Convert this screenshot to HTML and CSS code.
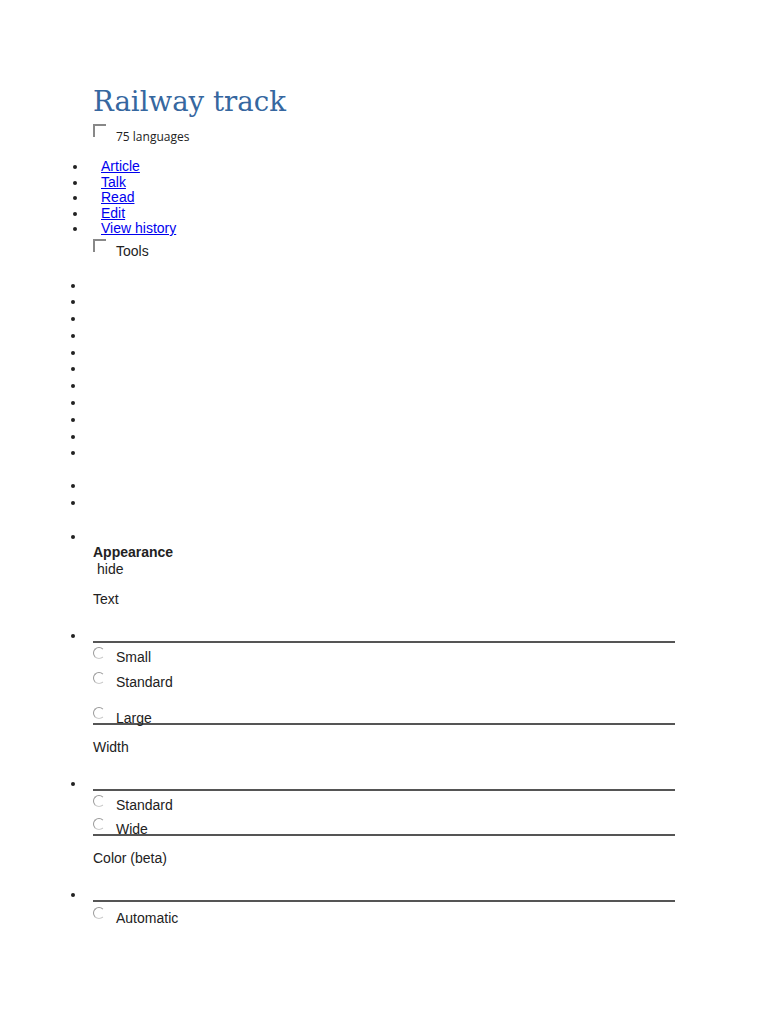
FILE: index.html
```html
<!DOCTYPE html>
<html lang="en">
<head>
    <meta charset="UTF-8">
    <title>Railway track</title>
    <link rel="stylesheet" href="styles.css">
</head>
<body>
<div class="page">
    <h1 class="title">Railway track</h1>

    <!-- Idiomas -->
    <div class="toggle lang">
        <span class="check"></span>
        <span>75 languages</span>
    </div>

    <!-- Pestañas -->
    <ul class="tabs">
        <li><a href="#">Article</a></li>
        <li><a href="#">Talk</a></li>
        <li><a href="#">Read</a></li>
        <li><a href="#">Edit</a></li>
        <li><a href="#">View history</a></li>
    </ul>

    <div class="toggle tools">
        <span class="check"></span>
        <span>Tools</span>
    </div>

    <!-- Menú de herramientas (vacío) -->
    <ul class="dots">
        <li></li><li></li><li></li><li></li><li></li><li></li>
        <li></li><li></li><li></li><li></li><li></li>
    </ul>

    <ul class="dots second">
        <li></li><li></li>
    </ul>

    <!-- Apariencia -->
    <ul class="appearance">
        <li class="group first">
            <div class="app-title">Appearance</div>
            <div class="hide">hide</div>
            <div class="label">Text</div>
        </li>
        <li class="group">
            <div class="options">
                <div class="option"><span class="radio"></span>Small</div>
                <div class="option"><span class="radio"></span>Standard</div>
                <div class="option far"><span class="radio"></span>Large</div>
            </div>
            <div class="label">Width</div>
        </li>
        <li class="group">
            <div class="options">
                <div class="option"><span class="radio"></span>Standard</div>
                <div class="option near"><span class="radio"></span>Wide</div>
            </div>
            <div class="label">Color (beta)</div>
        </li>
        <li class="group last">
            <div class="options open">
                <div class="option"><span class="radio"></span>Automatic</div>
            </div>
        </li>
    </ul>
</div>
</body>
</html>
```

FILE: styles.css
```css
/* General */
body {
    margin: 0;
    font-family: "Liberation Sans", Arial, sans-serif;
    font-size: 14px;
    color: #222;
    background: #fff;
}

.page {
    padding: 87px 0 0 93px;
}

.title {
    margin: 0;
    font-family: "DejaVu Serif", serif;
    font-size: 27.6px;
    font-weight: normal;
    color: #36679f;
    line-height: 30px;
}

/* Casillas */
.toggle {
    display: flex;
    align-items: flex-start;
}

.check {
    width: 11px;
    height: 11px;
    border-top: 2px solid #888;
    border-left: 2px solid #888;
    margin-right: 10px;
}

.toggle span:last-child {
    padding-top: 4px;
    line-height: 17px;
}

.lang {
    margin-top: 7px;
    font-family: "Open Sans", sans-serif;
    font-size: 12px;
}

.tools {
    margin-top: 2px;
}

/* Pestañas */
.tabs {
    margin: 14px 0 0 -5px;
    padding-left: 0;
    line-height: 15.5px;
}

.tabs li {
    padding-left: 13px;
}

.tabs a {
    color: #0000ee;
}

/* Listas vacías */
.dots,
.appearance {
    margin: 0 0 0 -7px;
    padding-left: 0;
}

.dots li,
.appearance > li {
    padding-left: 7px;
}

.dots li {
    height: 16.8px;
}

.dots {
    margin-top: 17px;
}

.dots.second {
    margin-top: 16px;
}

/* Apariencia */
.appearance {
    margin-top: 17px;
}

.group::before {
    content: "\a0";
    display: block;
    line-height: 12px;
}

.group.first::before {
    line-height: 16px;
}

.group.last::before {
    line-height: 11px;
}

.app-title {
    font-weight: bold;
    line-height: 16px;
}

.hide {
    padding-left: 4px;
    line-height: 16px;
    margin-top: 1px;
}

.label {
    line-height: 16px;
    margin-top: 14px;
    margin-bottom: 20px;
}

.options {
    width: 582px;
    border-top: 2px solid #555;
    border-bottom: 2px solid #555;
    padding-top: 7px;
}

.options.open {
    border-bottom: none;
    padding-top: 9px;
}

.option {
    display: flex;
    align-items: center;
    line-height: 14px;
    height: 14px;
    margin-bottom: 11px;
}

.option:last-child {
    margin-bottom: 0;
    height: 12px;
    align-items: flex-start;
}

.option.far {
    margin-top: 22px;
}

.option.near {
    margin-top: -1px;
}

.radio {
    width: 10px;
    height: 10px;
    border: 1.5px solid #999;
    border-right-color: transparent;
    border-bottom-color: #ccc;
    border-radius: 50%;
    margin: -7px 11px 0 0;
}

.option:last-child .radio {
    margin-top: -4px;
}
```
